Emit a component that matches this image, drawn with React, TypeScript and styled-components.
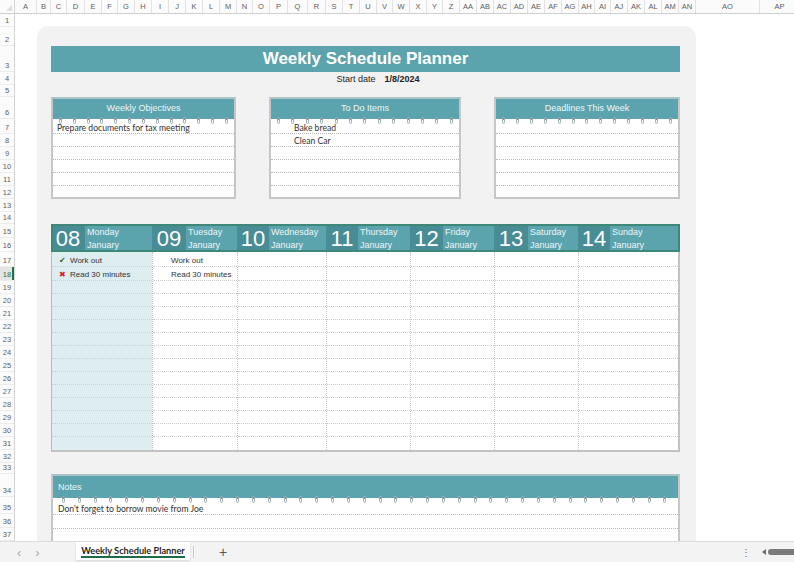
import React from 'react'
import styled, { createGlobalStyle } from 'styled-components'

const GlobalStyle = createGlobalStyle`
  html, body { margin: 0; padding: 0; background: #ffffff; }
  body { font-family: "Liberation Sans", Arial, sans-serif; color: #262626; }
  * { box-sizing: border-box; }
`

const TEAL = '#5ba3ad'
const TEAL_DARK = '#488c95'
const LINE = '#b9b9b9'

const columns: [string, number][] = [
  ['A', 22], ['B', 14], ['C', 16], ['D', 18], ['E', 17], ['F', 16], ['G', 17], ['H', 17],
  ['I', 17], ['J', 17], ['K', 17], ['L', 17], ['M', 17], ['N', 16], ['O', 17], ['P', 18],
  ['Q', 20], ['R', 18], ['S', 17], ['T', 17], ['U', 17], ['V', 16], ['W', 17], ['X', 17],
  ['Y', 16], ['Z', 17], ['AA', 17], ['AB', 17], ['AC', 17], ['AD', 17], ['AE', 17], ['AF', 17],
  ['AG', 17], ['AH', 16], ['AI', 16], ['AJ', 17], ['AK', 17], ['AL', 17], ['AM', 17], ['AN', 17],
  ['AO', 64], ['AP', 40],
]

const rowHeights: number[] = [
  13, 19, 26, 13, 12, 22, 15, 13, 13, 13, 13, 13, 13, 12, 14, 14, 15, 14,
  ...Array(13).fill(13), 13, 11, 23, 17, 14, 13,
]

type Item = { mark?: 'done' | 'miss'; text: string }
type Day = { num: string; name: string; w: number; n: number; shaded?: boolean; items: Item[] }

const days: Day[] = [
  { num: '08', name: 'Monday', w: 101, n: 34, shaded: true, items: [{ mark: 'done', text: 'Work out' }, { mark: 'miss', text: 'Read 30 minutes' }] },
  { num: '09', name: 'Tuesday', w: 85, n: 34, items: [{ text: 'Work out' }, { text: 'Read 30 minutes' }] },
  { num: '10', name: 'Wednesday', w: 89, n: 32, items: [] },
  { num: '11', name: 'Thursday', w: 84, n: 32, items: [] },
  { num: '12', name: 'Friday', w: 84, n: 33, items: [] },
  { num: '13', name: 'Saturday', w: 84, n: 34, items: [] },
  { num: '14', name: 'Sunday', w: 102, n: 32, items: [] },
]

const dayRowHeights: number[] = [15, 14, ...Array(13).fill(13)]

const boxes = [
  { title: 'Weekly Objectives', w: 185, indent: 4, items: ['Prepare documents for tax meeting'] },
  { title: 'To Do Items', w: 192, indent: 23, items: ['Bake bread', 'Clean Car'] },
  { title: 'Deadlines This Week', w: 186, indent: 4, items: [] as string[] },
]
const boxRowHeights = [15, 13, 13, 13, 13, 11]

/* ---------- frame ---------- */

const Page = styled.div`
  width: 794px;
  height: 562px;
  display: flex;
  flex-direction: column;
  overflow: hidden;
  background: #fff;
`

const ColHeader = styled.div`
  height: 14px;
  flex: none;
  display: flex;
  background: #fbfbfb;
  border-bottom: 1px solid #cfcfcf;
`

const Corner = styled.div`
  width: 15px;
  flex: none;
  position: relative;
  border-right: 1px solid #d6d6d6;
  &::after {
    content: '';
    position: absolute;
    right: 2px;
    bottom: 2px;
    border-left: 6px solid transparent;
    border-bottom: 6px solid #dcdcdc;
  }
`

const ColCell = styled.div<{ $w: number }>`
  width: ${p => p.$w}px;
  flex: none;
  font-size: 7.5px;
  line-height: 14px;
  color: #606060;
  text-align: center;
  border-right: 1px solid #e2e2e2;
`

const Main = styled.div`
  flex: 1;
  display: flex;
  overflow: hidden;
`

const RowHeader = styled.div`
  width: 15px;
  flex: none;
  display: flex;
  flex-direction: column;
  background: #fbfbfb;
  border-right: 1px solid #d4d4d4;
`

const RowCell = styled.div<{ $h: number; $sel?: boolean }>`
  height: ${p => p.$h}px;
  flex: none;
  display: flex;
  align-items: flex-end;
  justify-content: center;
  padding-bottom: 1px;
  font-size: 7.5px;
  color: ${p => (p.$sel ? '#217346' : '#606060')};
  background: ${p => (p.$sel ? '#e4e4e4' : 'transparent')};
  box-shadow: ${p => (p.$sel ? 'inset -2px 0 0 #217346' : 'none')};
  border-bottom: 1px solid #ececec;
`

const Sheet = styled.div`
  flex: 1;
  overflow: hidden;
`

const Panel = styled.div`
  width: 659px;
  margin: 12px 0 0 22px;
  min-height: 600px;
  padding: 20px 16px 0 14px;
  background: #f2f2f2;
  border-radius: 12px 12px 0 0;
`

/* ---------- title ---------- */

const TitleBar = styled.div`
  height: 26px;
  background: ${TEAL};
  color: #fff;
  font-weight: bold;
  font-size: 17px;
  line-height: 26px;
  text-align: center;
`

const StartRow = styled.div`
  height: 13px;
  display: flex;
  justify-content: center;
  align-items: center;
  gap: 9px;
  padding-left: 25px;
  font-size: 9px;
  color: #222;
  strong { font-weight: bold; }
`

/* ---------- notebook boxes ---------- */

const BoxRow = styled.div`
  margin-top: 12px;
  height: 102px;
  display: flex;
  justify-content: space-between;
`

const Box = styled.div<{ $w: number }>`
  width: ${p => p.$w}px;
  display: flex;
  flex-direction: column;
  background: #fff;
  border: 2px solid #c6c6c6;
  border-top-color: #aac3c7;
`

const BoxHead = styled.div<{ $h: number; $left?: boolean }>`
  position: relative;
  height: ${p => p.$h}px;
  flex: none;
  background: ${TEAL};
  color: #eef7f8;
  font-size: 9px;
  line-height: 11px;
  padding: ${p => (p.$left ? '6px 0 0 5px' : '4px 0 0 0')};
  text-align: ${p => (p.$left ? 'left' : 'center')};
`

const Rings = styled.div<{ $pl: number; $pr: number }>`
  position: absolute;
  left: ${p => p.$pl}px;
  right: ${p => p.$pr}px;
  bottom: -5px;
  display: flex;
  justify-content: space-between;
`

const Ring = styled.span`
  width: 3px;
  height: 7px;
  border: 1px solid #a3b0b4;
  border-radius: 1.5px;
  background: linear-gradient(#7f8e93 0 45%, #f7f7f7 45%);
`

const Line = styled.div<{ $h: number; $indent: number; $last?: boolean }>`
  height: ${p => p.$h}px;
  flex: none;
  display: flex;
  align-items: flex-end;
  padding: 0 0 0 ${p => p.$indent}px;
  font-family: Lato, "Open Sans", sans-serif;
  font-size: 8.6px;
  color: #303030;
  white-space: nowrap;
  border-bottom: ${p => (p.$last ? 'none' : '1px dotted #b8b8b8')};
`

/* ---------- week ---------- */

const Week = styled.div`
  margin-top: 25px;
  display: flex;
  flex-direction: column;
`

const WeekHead = styled.div`
  position: relative;
  height: 28px;
  display: flex;
  &::after {
    content: '';
    position: absolute;
    inset: 0;
    border: 2px solid #3d8876;
    pointer-events: none;
  }
`

const DayHead = styled.div<{ $w: number }>`
  width: ${p => p.$w}px;
  flex: none;
  display: flex;
  background: ${TEAL};
`

const DayNum = styled.div<{ $w: number }>`
  width: ${p => p.$w}px;
  flex: none;
  display: flex;
  align-items: center;
  justify-content: center;
  padding-top: 1px;
  background: ${TEAL_DARK};
  color: #fff;
  font-size: 22px;
`

const DayName = styled.div`
  flex: 1;
  padding: 2px 0 0 2px;
  color: #eef7f8;
  font-size: 9px;
  line-height: 13px;
  white-space: nowrap;
`

const WeekBody = styled.div`
  display: flex;
  border-left: 1px solid ${LINE};
  border-right: 2px solid #c2c2c2;
  border-bottom: 2px solid #c2c2c2;
`

const DayCol = styled.div<{ $w: number; $shaded?: boolean; $first?: boolean }>`
  width: ${p => p.$w}px;
  flex: none;
  display: flex;
  flex-direction: column;
  background: ${p => (p.$shaded ? '#deedf0' : '#fff')};
  border-left: ${p => (p.$first ? 'none' : '1px dotted #c4c4c4')};
`

const DayRow = styled.div<{ $h: number }>`
  height: ${p => p.$h}px;
  flex: none;
  display: flex;
  align-items: center;
  padding: 2px 0 0 7px;
  border-bottom: 1px dotted #cdcdcd;
  font-size: 8px;
  color: #333;
  white-space: nowrap;
  &:last-child { border-bottom: none; }
`

const Mark = styled.span<{ $kind?: 'done' | 'miss' }>`
  width: 11px;
  flex: none;
  font-family: "DejaVu Sans", sans-serif;
  font-size: 8px;
  color: ${p => (p.$kind === 'miss' ? '#d42020' : '#2f6e2a')};
`

/* ---------- notes ---------- */

const Notes = styled(Box)`
  margin-top: 22px;
`

/* ---------- tab bar ---------- */

const TabBar = styled.div`
  height: 21px;
  flex: none;
  display: flex;
  align-items: flex-start;
  background: #f3f3f3;
  border-top: 1px solid #dcdcdc;
`

const NavArrows = styled.div`
  width: 76px;
  height: 20px;
  flex: none;
  display: flex;
  align-items: center;
  gap: 14px;
  padding-left: 17px;
  color: #a9a9a9;
  font-size: 13px;
`

const SheetTab = styled.div`
  width: 114px;
  height: 18px;
  display: flex;
  justify-content: center;
  align-items: center;
  background: #fff;
  box-shadow: 0 1px 2px rgba(0, 0, 0, 0.12);
  span {
    font-family: Lato, "Open Sans", sans-serif;
    font-weight: bold;
    font-size: 9.2px;
    color: #1f1f1f;
    border-bottom: 2px solid #1e6b4a;
    line-height: 11px;
  }
`

const TabDivider = styled.div`
  width: 1px;
  height: 12px;
  margin: 4px 0 0 3px;
  background: #c8c8c8;
`

const AddSheet = styled.div`
  margin-left: 25px;
  height: 20px;
  line-height: 20px;
  color: #555;
  font-size: 14px;
`

const Spacer = styled.div`
  flex: 1;
`

const RightTools = styled.div`
  height: 20px;
  display: flex;
  align-items: center;
  color: #666;
`

const Dots = styled.span`
  font-size: 10px;
  margin-right: 11px;
`

const ScrollLeft = styled.span`
  width: 0;
  height: 0;
  border-top: 3px solid transparent;
  border-bottom: 3px solid transparent;
  border-right: 4px solid #6a6a6a;
  margin-right: 2px;
`

const Thumb = styled.span`
  width: 26px;
  height: 6px;
  border-radius: 3px 0 0 3px;
  background: #7b7b7b;
`

const App: React.FC = () => {
  return (
    <Page>
      <GlobalStyle />
      <ColHeader>
        <Corner />
        {columns.map(([l, w]) => (
          <ColCell key={l} $w={w}>{l}</ColCell>
        ))}
      </ColHeader>

      <Main>
        <RowHeader>
          {rowHeights.map((h, i) => (
            <RowCell key={i} $h={h} $sel={i === 17}>{i + 1}</RowCell>
          ))}
        </RowHeader>

        <Sheet>
          <Panel>
            <TitleBar>Weekly Schedule Planner</TitleBar>
            <StartRow>
              <span>Start date</span>
              <strong>1/8/2024</strong>
            </StartRow>

            <BoxRow>
              {boxes.map(b => (
                <Box key={b.title} $w={b.w}>
                  <BoxHead $h={20}>
                    {b.title}
                    <Rings $pl={6} $pr={6}>
                      {Array.from({ length: 13 }).map((_, i) => <Ring key={i} />)}
                    </Rings>
                  </BoxHead>
                  {boxRowHeights.map((h, i) => (
                    <Line key={i} $h={h} $indent={b.indent} $last={i === boxRowHeights.length - 1}>
                      {b.items[i] ?? ''}
                    </Line>
                  ))}
                </Box>
              ))}
            </BoxRow>

            <Week>
              <WeekHead>
                {days.map(d => (
                  <DayHead key={d.num} $w={d.w}>
                    <DayNum $w={d.n}>{d.num}</DayNum>
                    <DayName>
                      {d.name}
                      <br />
                      January
                    </DayName>
                  </DayHead>
                ))}
              </WeekHead>
              <WeekBody>
                {days.map((d, di) => (
                  <DayCol key={d.num} $w={di === 0 ? d.w - 1 : di === days.length - 1 ? d.w - 2 : d.w} $shaded={d.shaded} $first={di === 0}>
                    {dayRowHeights.map((h, i) => {
                      const it = d.items[i]
                      return (
                        <DayRow key={i} $h={h}>
                          <Mark $kind={it?.mark}>{it?.mark === 'done' ? '✔' : it?.mark === 'miss' ? '✖' : ''}</Mark>
                          {it?.text ?? ''}
                        </DayRow>
                      )
                    })}
                  </DayCol>
                ))}
              </WeekBody>
            </Week>

            <Notes $w={629}>
              <BoxHead $h={22} $left>
                Notes
                <Rings $pl={9} $pr={11}>
                  {Array.from({ length: 39 }).map((_, i) => <Ring key={i} />)}
                </Rings>
              </BoxHead>
              <Line $h={17} $indent={5}>Don't forget to borrow movie from Joe</Line>
              <Line $h={14} $indent={5} />
              <Line $h={13} $indent={5} />
              <Line $h={13} $indent={5} />
            </Notes>
          </Panel>
        </Sheet>
      </Main>

      <TabBar>
        <NavArrows>
          <span>‹</span>
          <span>›</span>
        </NavArrows>
        <SheetTab>
          <span>Weekly Schedule Planner</span>
        </SheetTab>
        <TabDivider />
        <AddSheet>+</AddSheet>
        <Spacer />
        <RightTools>
          <Dots>⋮</Dots>
          <ScrollLeft />
          <Thumb />
        </RightTools>
      </TabBar>
    </Page>
  )
}

export default App
